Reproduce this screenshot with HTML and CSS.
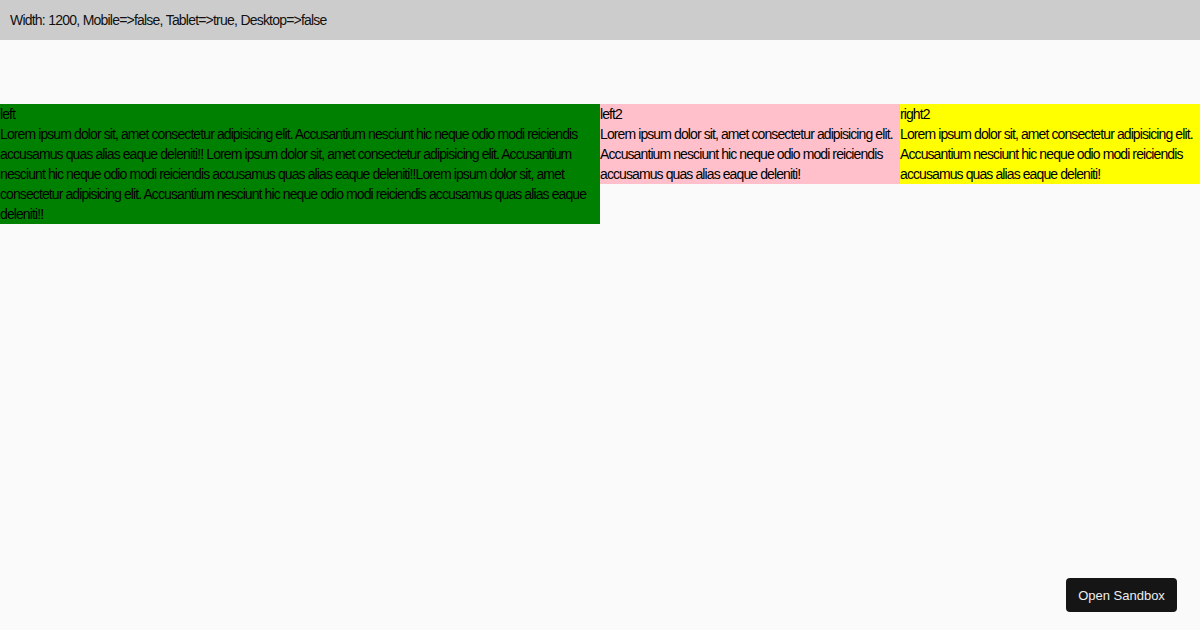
FILE: index.html
```html
<!DOCTYPE html>
<html>
<head>
<meta charset="utf-8">
<link rel="stylesheet" href="styles.css">
</head>
<body>
<div class="topbar">Width: 1200, Mobile=&gt;false, Tablet=&gt;true, Desktop=&gt;false</div>
<main class="row">
  <section class="col col-left">
    <div>left</div>
    <div>Lorem ipsum dolor sit, amet consectetur adipisicing elit. Accusantium nesciunt hic neque odio modi reiciendis accusamus quas alias eaque deleniti!! Lorem ipsum dolor sit, amet consectetur adipisicing elit. Accusantium nesciunt hic neque odio modi reiciendis accusamus quas alias eaque deleniti!!Lorem ipsum dolor sit, amet consectetur adipisicing elit. Accusantium nesciunt hic neque odio modi reiciendis accusamus quas alias eaque deleniti!!</div>
  </section>
  <section class="col col-left2">
    <div>left2</div>
    <div>Lorem ipsum dolor sit, amet consectetur adipisicing elit. Accusantium nesciunt hic neque odio modi reiciendis accusamus quas alias eaque deleniti!</div>
  </section>
  <section class="col col-right2">
    <div>right2</div>
    <div>Lorem ipsum dolor sit, amet consectetur adipisicing elit. Accusantium nesciunt hic neque odio modi reiciendis accusamus quas alias eaque deleniti!</div>
  </section>
</main>
<button class="sandbox-btn">Open Sandbox</button>
</body>
</html>
```
FILE: styles.css
```css
html, body {
  margin: 0;
  padding: 0;
}
body {
  background: #fafafa;
  font-family: "Liberation Sans", Arial, sans-serif;
  font-size: 14px;
  line-height: 20px;
  color: #000;
  letter-spacing: -0.9px;
}
.topbar {
  height: 40px;
  line-height: 40px;
  background: #cccccc;
  padding: 0 10px;
  color: #111;
  letter-spacing: -0.8px;
  word-spacing: 0.3px;
}
.row {
  display: flex;
  align-items: flex-start;
  margin-top: 64px;
}
.col-left {
  width: 600px;
  background: #008000;
}
.col-left2 {
  width: 300px;
  background: #ffc0cb;
}
.col-right2 {
  width: 300px;
  background: #ffff00;
}
.sandbox-btn {
  position: fixed;
  right: 23px;
  bottom: 18px;
  width: 111px;
  height: 34px;
  background: #151515;
  color: #eee;
  border: none;
  border-radius: 4px;
  font-family: "Liberation Sans", Arial, sans-serif;
  font-size: 13px;
  letter-spacing: 0;
  word-spacing: 0;
  padding: 0;
}
```
